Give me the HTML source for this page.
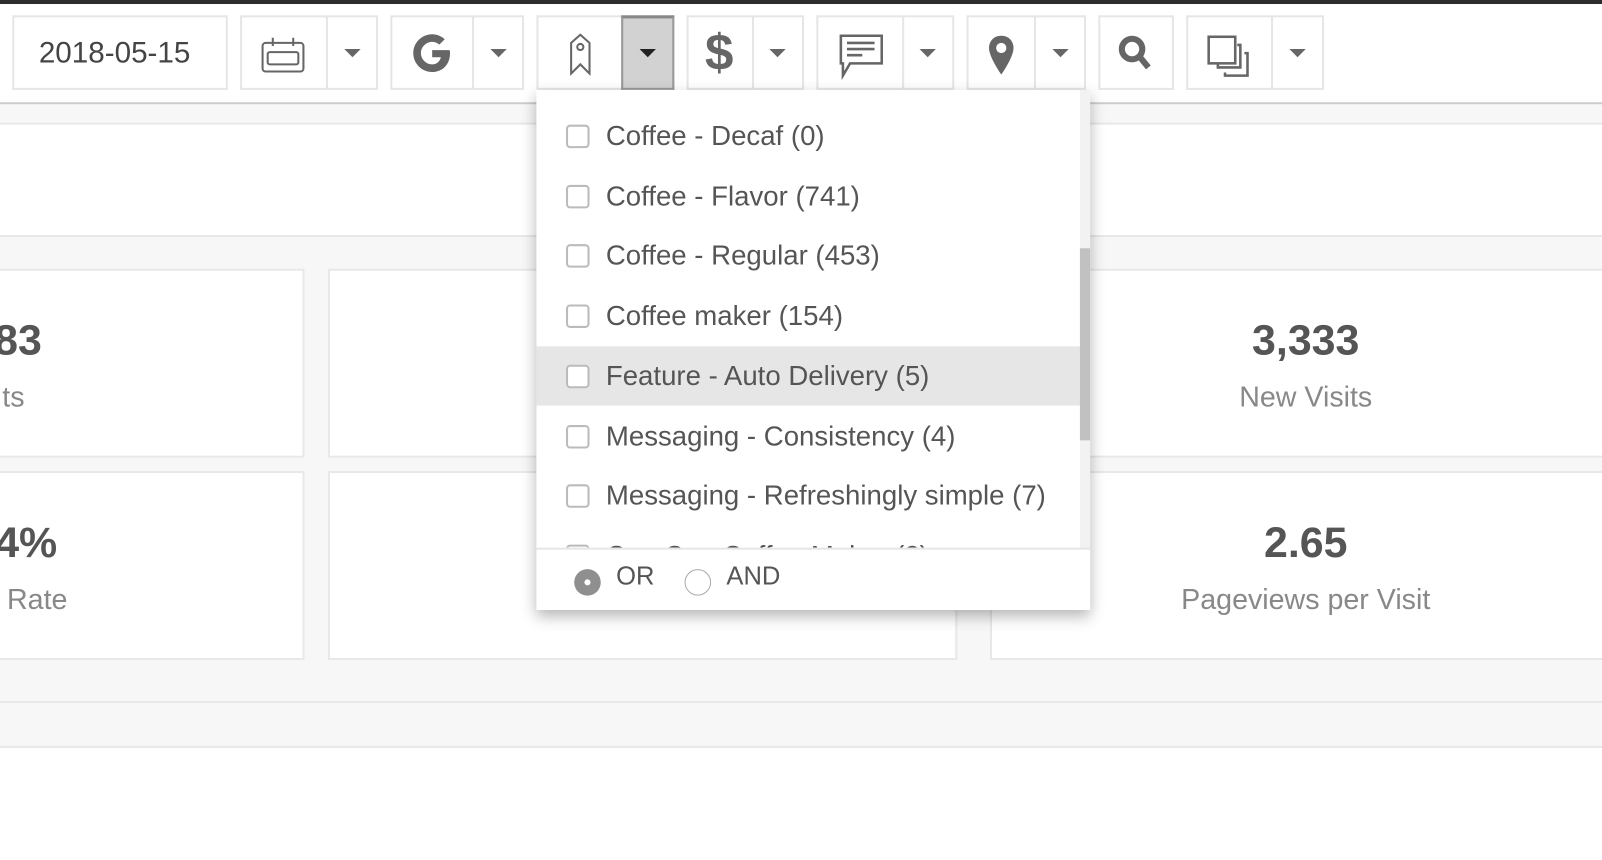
<!DOCTYPE html>
<html><head><style>
body{margin:0;width:1602px;height:842px;position:relative;overflow:hidden;background:#fff;font-family:"Liberation Sans",sans-serif;color:#555}
#w{position:absolute;left:0;top:0;width:1568px;height:824px;transform:scale(1.0217);transform-origin:0 0}
.a{position:absolute;box-sizing:border-box;white-space:nowrap}
.btn{position:absolute;top:15px;height:73px;border:2px solid #e6e6e6;background:#fff;box-sizing:border-box}
.car{position:absolute;width:0;height:0;border-left:8px solid transparent;border-right:8px solid transparent;border-top:8px solid #666}
.sep{position:absolute;top:15px;width:2px;height:73px;background:#e6e6e6}
.card{position:absolute;background:#fff;border:2px solid #e8e8e8;box-sizing:border-box;text-align:center;white-space:nowrap}
.big{font-size:42px;font-weight:bold;color:#555}
.lab{font-size:28px;color:#888}
.item{position:absolute;left:0;width:532px;height:58px;font-size:27px;color:#555;line-height:58px;white-space:nowrap}
.cb{position:absolute;left:29px;top:18px;width:23px;height:23px;border:2px solid #bbb;border-radius:4px;box-sizing:border-box;background:#fff}
.item span{position:absolute;left:68px}
</style></head><body><div id="w">
<div class="a" style="left:0;top:0;width:1602px;height:4px;background:#2d2d2d"></div>
<div class="a" style="left:0;top:100px;width:1602px;height:742px;background:#f7f7f7;border-top:2px solid #ccc;box-shadow:0 -1px 3px rgba(0,0,0,.2)"></div>
<div class="a" style="left:0;top:120px;width:1602px;height:112px;background:#fff;border-top:2px solid #e8e8e8;border-bottom:2px solid #e8e8e8"></div>
<div class="a" style="left:0;top:730px;width:1602px;height:112px;background:#fff;border-top:2px solid #e8e8e8"></div>
<div class="a" style="left:0;top:686px;width:1602px;height:2px;background:#e8e8e8"></div>
<div class="card" style="left:-10px;top:263px;width:308px;height:185px"><div class="big" style="position:absolute;right:255px;top:44px">83</div><div class="lab" style="position:absolute;right:272px;top:108px">ts</div></div>
<div class="card" style="left:-10px;top:461px;width:308px;height:185px"><div class="big" style="position:absolute;right:240px;top:44px">4%</div><div class="lab" style="position:absolute;right:230px;top:108px">e Rate</div></div>
<div class="card" style="left:321px;top:263px;width:616px;height:185px"></div>
<div class="card" style="left:321px;top:461px;width:616px;height:185px"></div>
<div class="card" style="left:969px;top:263px;width:650px;height:185px"><div class="big" style="position:absolute;left:0;width:614px;top:44px">3,333</div><div class="lab" style="position:absolute;left:0;width:614px;top:108px">New Visits</div></div>
<div class="card" style="left:969px;top:461px;width:650px;height:185px"><div class="big" style="position:absolute;left:0;width:614px;top:44px">2.65</div><div class="lab" style="position:absolute;left:0;width:614px;top:108px">Pageviews per Visit</div></div>

<div class="a" style="left:0;top:4px;width:1602px;height:96px;background:#fff"></div>
<div class="btn" style="left:12px;width:211px;font-size:29px;line-height:70px;padding-left:24px;color:#444">2018-05-15</div>
<div class="btn" style="left:235px;width:135px"></div><div class="sep" style="left:319px"></div><div class="car" style="left:337px;top:48px"></div>
<svg class="a" style="left:254px;top:35px" width="46" height="38" viewBox="0 0 46 38" fill="none" stroke="#666" stroke-width="2"><rect x="3" y="7" width="40" height="28" rx="3"/><rect x="8" y="16" width="30" height="12" rx="2"/><path d="M13 2v8M33 2v8"/></svg>
<div class="btn" style="left:382px;width:131px"></div><div class="sep" style="left:462px"></div><div class="car" style="left:480px;top:48px"></div>
<svg class="a" style="left:402px;top:31px" width="42" height="42" viewBox="0 0 42 42"><path d="M37 18H21v7h8.5c-1 4.5-4.5 7-8.5 7-6 0-11-5-11-11s5-11 11-11c2.8 0 5.2 1 7 2.7l5.3-5.3C30 4.4 25.8 2.5 21 2.5 10.8 2.5 2.5 10.8 2.5 21S10.8 39.5 21 39.5c9.5 0 17.5-6.8 17.5-18.5 0-1-.2-2-.5-3z" fill="#666"/></svg>
<div class="btn" style="left:525px;width:135px"></div>
<div class="a" style="left:608px;top:15px;width:52px;height:73px;background:#d2d2d2;border:2px solid #999;border-top:3px solid #888"></div><div class="car" style="left:626px;top:48px;border-top-color:#222"></div>
<svg class="a" style="left:555px;top:32px" width="26" height="42" viewBox="0 0 26 42" fill="none" stroke="#666" stroke-width="2"><path d="M4 10 L13 2 L22 10 V40 L13 31 L4 40 Z"/><circle cx="13" cy="14" r="3"/></svg>
<div class="btn" style="left:672px;width:115px"></div><div class="sep" style="left:736px"></div><div class="car" style="left:753px;top:48px"></div>
<div class="a" style="left:690px;top:22px;font-size:50px;font-weight:bold;color:#666">$</div>
<div class="btn" style="left:799px;width:135px"></div><div class="sep" style="left:883px"></div><div class="car" style="left:900px;top:48px"></div>
<svg class="a" style="left:820px;top:32px" width="46" height="46" viewBox="0 0 46 46" fill="none" stroke="#666" stroke-width="2.5"><path d="M3 3 H43 V30 H12 L5 42 V30 H3 Z"/><path d="M9 10H36M9 16H36M9 22H24"/></svg>
<div class="btn" style="left:946px;width:117px"></div><div class="sep" style="left:1012px"></div><div class="car" style="left:1030px;top:48px"></div>
<svg class="a" style="left:966px;top:34px" width="28" height="40" viewBox="0 0 28 40"><path d="M14 1C6 1 2 7 2 13c0 9 12 26 12 26s12-17 12-26C26 7 22 1 14 1z" fill="#666"/><circle cx="14" cy="13" r="5" fill="#fff"/></svg>
<div class="btn" style="left:1075px;width:74px"></div>
<svg class="a" style="left:1094px;top:34px" width="36" height="36" viewBox="0 0 36 36" fill="none" stroke="#666"><circle cx="14" cy="14" r="10" stroke-width="6"/><path d="M21 21l9 11" stroke-width="6"/></svg>
<div class="btn" style="left:1161px;width:135px"></div><div class="sep" style="left:1244px"></div><div class="car" style="left:1262px;top:48px"></div>
<svg class="a" style="left:1180px;top:34px" width="48" height="42" viewBox="0 0 48 42" fill="none" stroke="#666" stroke-width="2.5"><rect x="3" y="2" width="26" height="26"/><path d="M31 10h3v22H12v-3M38 18h3v22H19v-3"/></svg>

<div class="a" style="left:525px;top:88px;width:542px;height:509px;background:#fff;box-shadow:0 6px 14px rgba(0,0,0,.3);overflow:hidden">
<div class="item" style="top:16px"><div class="cb"></div><span>Coffee - Decaf (0)</span></div>
<div class="item" style="top:75px"><div class="cb"></div><span>Coffee - Flavor (741)</span></div>
<div class="item" style="top:133px"><div class="cb"></div><span>Coffee - Regular (453)</span></div>
<div class="item" style="top:192px"><div class="cb"></div><span>Coffee maker (154)</span></div>
<div class="item" style="top:251px;background:#e6e6e6"><div class="cb"></div><span>Feature - Auto Delivery (5)</span></div>
<div class="item" style="top:310px"><div class="cb"></div><span>Messaging - Consistency (4)</span></div>
<div class="item" style="top:368px"><div class="cb"></div><span>Messaging - Refreshingly simple (7)</span></div>
<div class="item" style="top:427px"><div class="cb"></div><span>Cup Cup Coffee Maker (2)</span></div>
<div class="a" style="left:532px;top:0;width:10px;height:449px;background:#f2f2f2"></div>
<div class="a" style="left:532px;top:155px;width:10px;height:188px;background:#c1c1c1"></div>
<div class="a" style="left:0;top:448px;width:542px;height:61px;background:#fff;border-top:2px solid #e6e6e6"></div>
<div class="a" style="left:37px;top:469px;width:26px;height:26px;border-radius:50%;background:#8f8f8f"></div>
<div class="a" style="left:47px;top:479px;width:6px;height:6px;border-radius:50%;background:#fff"></div>
<div class="a" style="left:78px;top:462px;font-size:25px;color:#555">OR</div>
<div class="a" style="left:145px;top:469px;width:26px;height:26px;border-radius:50%;border:1px solid #aaa"></div>
<div class="a" style="left:186px;top:462px;font-size:25px;color:#555">AND</div>
</div>
</div></body></html>
